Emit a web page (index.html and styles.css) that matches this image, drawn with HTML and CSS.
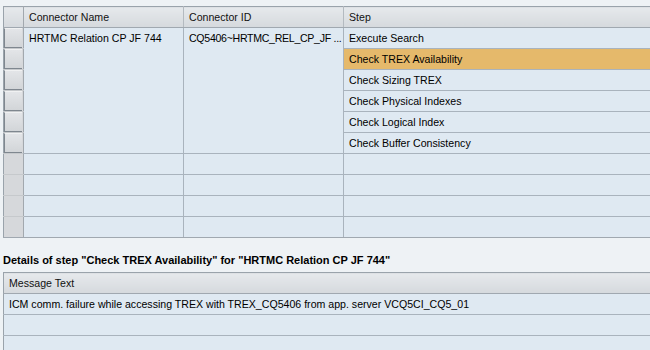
FILE: index.html
```html
<!DOCTYPE html>
<html>
<head>
<meta charset="utf-8">
<link rel="stylesheet" href="styles.css">
</head>
<body>
<div class="page">
  <table class="grid main">
    <colgroup>
      <col class="c-sel"><col class="c-name"><col class="c-id"><col class="c-step">
    </colgroup>
    <thead>
      <tr><th class="sel"></th><th>Connector Name</th><th>Connector ID</th><th>Step</th></tr>
    </thead>
    <tbody>
      <tr><td class="sel"><span class="btn"></span></td><td class="span" rowspan="6">HRTMC Relation CP JF 744</td><td class="span tight" rowspan="6">CQ5406~HRTMC_REL_CP_JF ...</td><td>Execute Search</td></tr>
      <tr><td class="sel"><span class="btn"></span></td><td class="hl">Check TREX Availability</td></tr>
      <tr><td class="sel"><span class="btn"></span></td><td>Check Sizing TREX</td></tr>
      <tr><td class="sel"><span class="btn"></span></td><td>Check Physical Indexes</td></tr>
      <tr><td class="sel"><span class="btn"></span></td><td>Check Logical Index</td></tr>
      <tr><td class="sel"><span class="btn"></span></td><td>Check Buffer Consistency</td></tr>
      <tr><td class="sel"></td><td></td><td></td><td></td></tr>
      <tr><td class="sel"></td><td></td><td></td><td></td></tr>
      <tr><td class="sel"></td><td></td><td></td><td></td></tr>
      <tr><td class="sel"></td><td></td><td></td><td></td></tr>
    </tbody>
  </table>

  <h2 class="title">Details of step "Check TREX Availability" for "HRTMC Relation CP JF 744"</h2>

  <table class="grid detail">
    <thead><tr><th>Message Text</th></tr></thead>
    <tbody>
      <tr><td>ICM comm. failure while accessing TREX with TREX_CQ5406 from app. server VCQ5CI_CQ5_01</td></tr>
      <tr><td></td></tr>
      <tr><td></td></tr>
    </tbody>
  </table>
</div>
</body>
</html>
```

FILE: styles.css
```css
html, body {
  margin: 0;
  padding: 0;
  background: #eef2f5;
  overflow: hidden;
}
.page {
  padding: 6px 0 0 3px;
  font-family: "Liberation Sans", Arial, sans-serif;
  font-size: 10.6px;
  color: #000;
  width: 700px;
}
.grid {
  border-collapse: collapse;
  table-layout: fixed;
  border-left: 1px solid #9aa3ab;
  border-top: 1px solid #9aa3ab;
}
.main { width: 700px; }
.c-sel { width: 20px; }
.c-name { width: 160px; }
.c-id { width: 160px; }
.c-step { width: 360px; }
.grid th, .grid td {
  height: 21px;
  padding: 0 5px;
  text-align: left;
  white-space: nowrap;
  overflow: hidden;
  font-weight: normal;
  border-right: 1px solid #a9b3bd;
  border-bottom: 1px solid #a9b3bd;
  box-sizing: border-box;
}
.grid th {
  background: linear-gradient(#e6e9ec, #d5d9dd);
  border-bottom: 1px solid #a0a8b0;
  border-right: 1px solid #b4bac0;
  color: #111;
}
.grid td {
  background: #dfe9f2;
}
.grid td.span {
  vertical-align: top;
  padding-top: 4px;
}
.grid td.tight {
  padding-right: 0;
  letter-spacing: -0.3px;
}
.grid td.hl {
  background: #e5b96b;
}
.grid .sel {
  padding: 0;
  background: #d6d8db;
  border-right: 1px solid #a2a8ae;
  border-bottom: 1px solid #c6c9cc;
}
.grid th.sel {
  background: linear-gradient(#e6e9ec, #d5d9dd);
  border-bottom: 1px solid #a0a8b0;
}
.grid tbody tr:nth-child(10) td {
  border-bottom: 1px solid #a0a8b0;
}
.btn {
  display: block;
  height: 20px;
  margin: 0 1px 0 0;
  background: linear-gradient(#e3e5e8, #d2d5d8);
  border-top: 1px solid #f0f1f2;
  border-bottom: 1px solid #7f878f;
  border-left: 1px solid #7f878f;
  box-sizing: border-box;
}
.title {
  margin: 15px 0 0 0;
  font-size: 11px;
  font-weight: bold;
  height: 14px;
  line-height: 14px;
}
.detail {
  margin-top: 5px;
  width: 700px;
}
```
